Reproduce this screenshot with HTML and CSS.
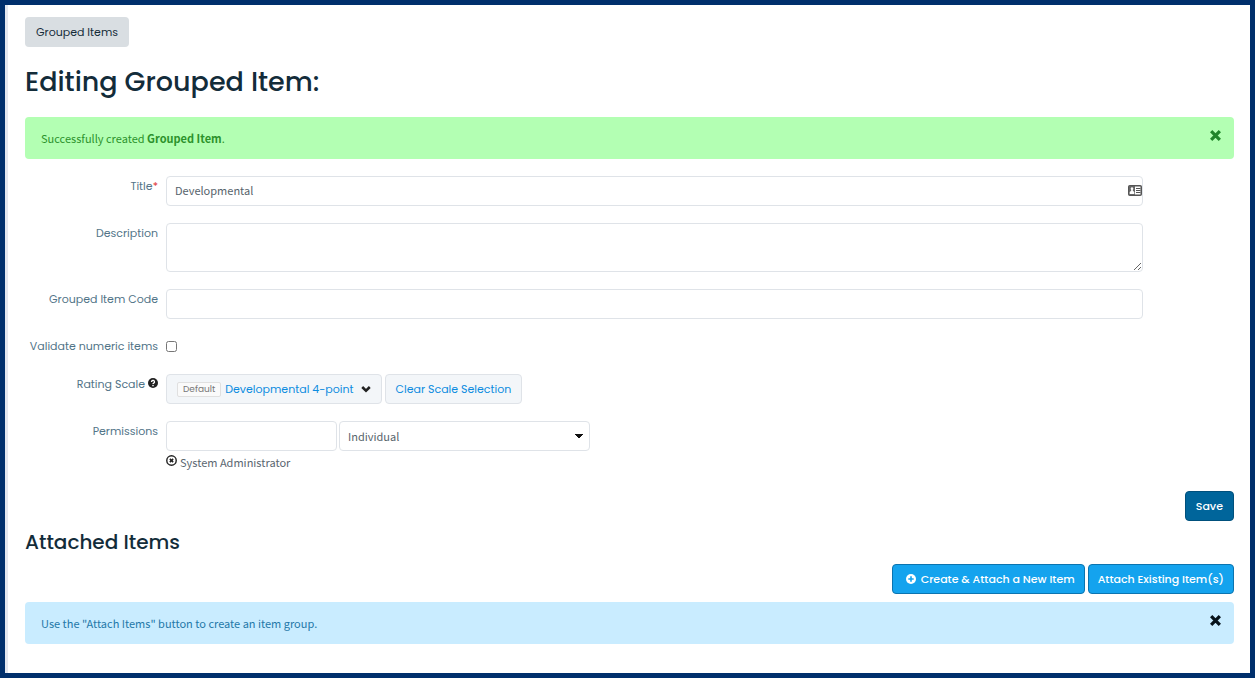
FILE: index.html
```html
<!DOCTYPE html>
<html lang="en">
<head>
<meta charset="utf-8">
<meta name="viewport" content="width=device-width, initial-scale=1">
<title>Editing Grouped Item</title>
<link rel="stylesheet" href="styles.css">
</head>
<body>
<main class="page">
  <nav class="crumbs"><a class="btn btn-crumb" href="#">Grouped Items</a></nav>
  <h1 class="page-title">Editing Grouped Item:</h1>

  <div class="alert alert-success" role="status">
    <p class="alert-text">Successfully created <strong>Grouped Item</strong>.</p>
    <button class="alert-close" type="button" aria-label="Dismiss message">
      <svg class="icon-close" viewBox="0 0 12 12"><path d="M2 2 10 10M10 2 2 10"/></svg>
    </button>
  </div>

  <form class="form">
    <div class="row">
      <label class="label" for="title">Title<span class="required">*</span></label>
      <div class="field field-title">
        <input class="control" id="title" type="text" value="Developmental">
        <svg class="icon-card" viewBox="0 0 14 11"><rect x=".75" y=".75" width="12.5" height="9.5" rx="1" fill="#fff" stroke="#555" stroke-width="1.5"/><path fill="#666" d="M1 1h6v9H1z"/><path fill="#fff" d="M4 2.200a1.400 1.400 0 0 1 .8 2.500v1L6.300 7v2H1.700V7l1.500-1.300v-1A1.400 1.400 0 0 1 4 2.200z"/><path d="M8 3.500h4.500M8 5.500h4.500M8 7.500h4.500" stroke="#555" stroke-width="1"/></svg>
      </div>
    </div>
    <div class="row">
      <label class="label" for="description">Description</label>
      <div class="field"><textarea class="control control-area" id="description"></textarea></div>
    </div>
    <div class="row">
      <label class="label" for="code">Grouped Item Code</label>
      <div class="field"><input class="control" id="code" type="text"></div>
    </div>
    <div class="row">
      <label class="label" for="validate">Validate numeric items</label>
      <div class="field field-check"><input class="check" id="validate" type="checkbox"></div>
    </div>
    <div class="row">
      <span class="label" id="scale-label">Rating Scale
        <svg class="icon-help" viewBox="0 0 10 10"><circle cx="5" cy="5" r="5" fill="#222"/><path d="M3.500 4a1.500 1.400 0 1 1 2.200 1.100Q5 5.500 5 6.100" fill="none" stroke="#fff" stroke-width="1.300"/><circle cx="5" cy="7.600" r=".8" fill="#fff"/></svg>
      </span>
      <div class="field field-inline" role="group" aria-labelledby="scale-label">
        <button class="btn btn-light" type="button"><span class="badge">Default</span>Developmental 4-point
          <svg class="icon-chevron" viewBox="0 0 10 8"><path d="M1.200 2 5 5.600 8.800 2"/></svg>
        </button>
        <button class="btn btn-light" type="button">Clear Scale Selection</button>
      </div>
    </div>
    <div class="row">
      <label class="label" for="permission">Permissions</label>
      <div class="field">
        <div class="field-inline permission">
          <input class="control control-search" id="permission" type="text">
          <select class="control control-select" aria-label="Permission type"><option>Individual</option></select>
        </div>
        <div class="person">
          <button class="person-remove" type="button" aria-label="Remove System Administrator">
            <svg class="icon-remove" viewBox="0 0 10 10"><circle cx="5" cy="5" r="4.300" fill="none" stroke="#222" stroke-width="1.300"/><path d="M3.500 3.500 6.500 6.500M6.500 3.500 3.500 6.500" stroke="#222" stroke-width="1.400"/></svg>
          </button>
          <span>System Administrator</span>
        </div>
      </div>
    </div>
    <div class="actions"><button class="btn btn-save" type="submit">Save</button></div>
  </form>

  <h2 class="section-title">Attached Items</h2>
  <div class="actions">
    <button class="btn btn-primary btn-create" type="button">
      <svg class="icon-plus" viewBox="0 0 10 10"><circle cx="5" cy="5" r="5" fill="#fff"/><path d="M5 2.300v5.400M2.300 5h5.400" stroke="#14a3ee" stroke-width="1.600"/></svg>
      Create &amp; Attach a New Item
    </button>
    <button class="btn btn-primary" type="button">Attach Existing Item(s)</button>
  </div>
  <div class="alert alert-info">
    <p class="alert-text">Use the "Attach Items" button to create an item group.</p>
    <button class="alert-close" type="button" aria-label="Dismiss hint">
      <svg class="icon-close" viewBox="0 0 12 12"><path d="M2 2 10 10M10 2 2 10"/></svg>
    </button>
  </div>
</main>
</body>
</html>
```
FILE: styles.css
```css
:root {
  --heading: Poppins, Inter, sans-serif;
  --text: "Source Sans Pro", "Noto Sans CJK SC", sans-serif;
  --line: #dfe3e8;
}

* { box-sizing: border-box; }

body {
  margin: 0;
  min-height: 100vh;
  border: 5px solid #002f6c;
  background: #fff;
  font: 11px/20px var(--text);
  color: #5a6670;
  display: flex;
}

.page {
  flex: 1;
  min-width: 0;
  border-left: 3px solid #e4e7ee;
  padding: 12px 16px 16px 17px;
}

.btn {
  display: inline-flex;
  align-items: center;
  height: 30px;
  padding: 0 10px;
  border: 1px solid transparent;
  border-radius: 4px;
  font: 500 11px/18px var(--heading);
  text-decoration: none;
  white-space: nowrap;
}

.crumbs { display: flex; }
.btn-crumb { background: #d9dee2; color: #152c3a; font-weight: 400; }
.btn-light { background: #f3f6f9; border-color: var(--line); color: #0d8ce0; font-weight: 400; }
.btn-save { background: #00659b; border-color: #00507c; color: #fff; }
.btn-primary { background: #14a3ee; border-color: #0b74b0; color: #fff; padding: 0 9px; }
.btn-create { padding-left: 13px; }

.page-title {
  margin: 14px 0;
  font: 500 27px/42px var(--heading);
  color: #132c3a;
}

.section-title {
  margin: 6px 0 7px;
  font: 500 20px/30px var(--heading);
  color: #132c3a;
}

.alert {
  display: flex;
  justify-content: space-between;
  align-items: flex-start;
  border-radius: 4px;
  padding: 11px 12px 11px 16px;
}
.alert-success { background: #b3ffb3; color: #2c922c; }
.alert-info { background: #c9ecff; color: #2478a8; margin-top: 8px; }
.alert-text { margin: 0; }
.alert-info .alert-close { color: #06121a; }
.alert-close {
  display: flex;
  padding: 1px 0;
  border: 0;
  background: none;
  color: #20852a;
}

.icon-close { width: 13px; height: 13px; fill: none; stroke: currentColor; stroke-width: 3; }

.form { margin-top: 17px; }
.row {
  display: grid;
  grid-template-columns: 133px 1fr;
  column-gap: 8px;
  margin-bottom: 17px;
}
.label {
  text-align: right;
  font: 400 11px/21px var(--heading);
  color: #527488;
  white-space: nowrap;
}
.required { color: #e03434; }
.field { margin-right: 91px; min-width: 0; }
.field-title { position: relative; }
.field-inline { display: flex; gap: 3px; }
.permission { gap: 2px; }
.field-check { display: flex; align-items: center; }

.control {
  display: block;
  width: 100%;
  height: 30px;
  padding: 0 8px 2px;
  border: 1px solid var(--line);
  border-radius: 4px;
  background-color: #fff;
  font: 11px/20px var(--text);
  color: #56636b;
}
.control-area { height: 49px; resize: vertical; }
.control-search { width: 171px; }
.control-select {
  width: 251px;
  padding-bottom: 0;
  appearance: none;
  background-image: conic-gradient(from -45deg at 50% 100%, #111 90deg, transparent 0);
  background-size: 8px 4px;
  background-position: right 6px center;
  background-repeat: no-repeat;
}
.check { width: 11px; height: 11px; margin: 0; }

.icon-card {
  position: absolute;
  right: 1px;
  top: 9px;
  width: 14px;
  height: 11px;
}
.icon-help { width: 10px; height: 10px; }
.icon-remove { width: 11px; height: 11px; }
.icon-plus { width: 10px; height: 10px; margin-right: 5px; }
.icon-chevron {
  width: 10px;
  height: 8px;
  margin-left: 7px;
  fill: none;
  stroke: #222;
  stroke-width: 2.6;
}

.badge {
  margin-right: 4px;
  padding: 0 5px;
  border: 1px solid #e0e0e0;
  border-radius: 2px;
  background: #fafafa;
  color: #777;
  font: 400 9px/13px var(--heading);
}

.person { display: flex; gap: 3px; padding: 1px 0 2px; }
.person-remove {
  display: flex;
  align-items: flex-start;
  padding: 3px 0 0;
  border: 0;
  background: none;
}

.actions { display: flex; justify-content: flex-end; gap: 3px; }
```
